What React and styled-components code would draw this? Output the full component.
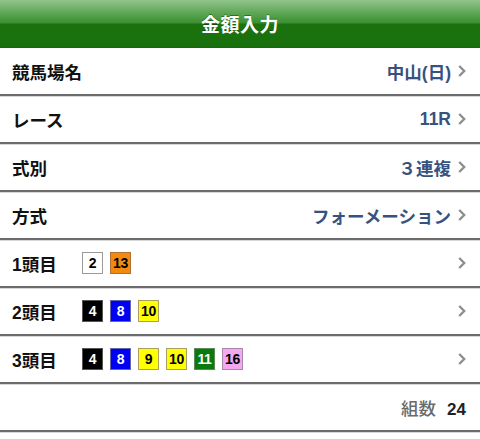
import React from 'react';
import styled, { createGlobalStyle } from 'styled-components';

const GlobalStyle = createGlobalStyle`
  html, body {
    margin: 0;
    padding: 0;
    background: #fff;
  }
  body {
    font-family: "Liberation Sans", "Noto Sans CJK JP", sans-serif;
  }
`;

const WAKU = {
  1: { bg: '#ffffff', fg: '#000', border: '#9a9a9a' },
  2: { bg: '#000000', fg: '#fff', border: '#555' },
  3: { bg: '#e81c1c', fg: '#fff', border: '#a33' },
  4: { bg: '#0000f2', fg: '#fff', border: '#66a' },
  5: { bg: '#ffff00', fg: '#000', border: '#a8a060' },
  6: { bg: '#0a7a0a', fg: '#fff', border: '#5a8a5a' },
  7: { bg: '#f28a12', fg: '#000', border: '#b07030' },
  8: { bg: '#f4a8f0', fg: '#000', border: '#a888a8' },
};

// horse number -> waku (16 runners)
const wakuOf = (n) => Math.ceil(n / 2);

const rows = [
  { label: '競馬場名', value: '中山(日)' },
  { label: 'レース', value: '11R' },
  { label: '式別', value: '３連複' },
  { label: '方式', value: 'フォーメーション' },
];

const picks = [
  { label: '1頭目', horses: [2, 13] },
  { label: '2頭目', horses: [4, 8, 10] },
  { label: '3頭目', horses: [4, 8, 9, 10, 11, 16] },
];

function Chevron() {
  return (
    <svg width="10" height="14" viewBox="0 0 10 14">
      <path d="M2.2 2 L7.2 7 L2.2 12" fill="none" stroke="#8e8e8e" strokeWidth="2.4" />
    </svg>
  );
}

function App() {
  return (
    <Page>
      <GlobalStyle />
      <NavBar>
        <Title>金額入力</Title>
      </NavBar>
      {rows.map((r) => (
        <Row key={r.label}>
          <Label>{r.label}</Label>
          <Value>{r.value}</Value>
          <Chevron />
        </Row>
      ))}
      {picks.map((p) => (
        <Row key={p.label}>
          <Label>{p.label}</Label>
          <Boxes>
            {p.horses.map((h) => {
              const w = WAKU[wakuOf(h)];
              return (
                <Box key={h} bg={w.bg} fg={w.fg} edge={w.border}>
                  {h}
                </Box>
              );
            })}
          </Boxes>
          <Chevron />
        </Row>
      ))}
      <Row>
        <Total>
          <TotalLabel>組数</TotalLabel>
          <TotalNum>24</TotalNum>
        </Total>
      </Row>
    </Page>
  );
}

const Page = styled.div`
  width: 480px;
  height: 439px;
  overflow: hidden;
  background: #fff;
`;

const NavBar = styled.div`
  height: 48px;
  box-sizing: border-box;
  display: flex;
  align-items: center;
  justify-content: center;
  background: linear-gradient(
    to bottom,
    #92c48c 0%,
    #62a95b 25%,
    #3a8f31 49%,
    #1b720f 51%,
    #18700c 100%
  );
  border-bottom: 1px solid #2a5a22;
`;

const Title = styled.div`
  color: #fff;
  font-family: "Noto Sans CJK JP", sans-serif;
  font-weight: 700;
  font-size: 19px;
  letter-spacing: 0.5px;
  text-shadow: 0 -1px 0 rgba(0, 0, 0, 0.35);
`;

const Row = styled.div`
  height: 48px;
  box-sizing: border-box;
  display: flex;
  align-items: center;
  padding: 0 13px 0 12px;
  border-bottom: 2px solid #6c6c6c;
  box-shadow: 0 1px 0 #d8d8d8;
`;

const Label = styled.div`
  width: 70px;
  flex-shrink: 0;
  white-space: nowrap;
  font-family: "Liberation Sans", "Noto Sans CJK JP", sans-serif;
  font-weight: 700;
  font-size: 17.5px;
  color: #111;
`;

const Value = styled.div`
  flex: 1;
  text-align: right;
  margin-right: 6px;
  font-family: "Liberation Sans", "Noto Sans CJK JP", sans-serif;
  font-weight: 700;
  font-size: 17.5px;
  color: #36527e;
`;

const Boxes = styled.div`
  flex: 1;
  display: flex;
  gap: 7px;
`;

const Box = styled.div`
  width: 21px;
  height: 22px;
  box-sizing: border-box;
  display: flex;
  align-items: center;
  justify-content: center;
  background: ${(p) => p.bg};
  color: ${(p) => p.fg};
  border: 1px solid ${(p) => p.edge};
  font-family: "Liberation Sans", sans-serif;
  font-weight: 700;
  font-size: 14px;
  letter-spacing: -0.3px;
`;

const Total = styled.div`
  flex: 1;
  display: flex;
  justify-content: flex-end;
  align-items: baseline;
  gap: 11px;
  padding-right: 1px;
`;

const TotalLabel = styled.span`
  font-family: "Noto Sans CJK JP", sans-serif;
  font-weight: 500;
  font-size: 17.5px;
  color: #6a6a6a;
`;

const TotalNum = styled.span`
  font-family: "Liberation Sans", sans-serif;
  font-weight: 700;
  font-size: 17px;
  color: #222;
`;

export default App;
